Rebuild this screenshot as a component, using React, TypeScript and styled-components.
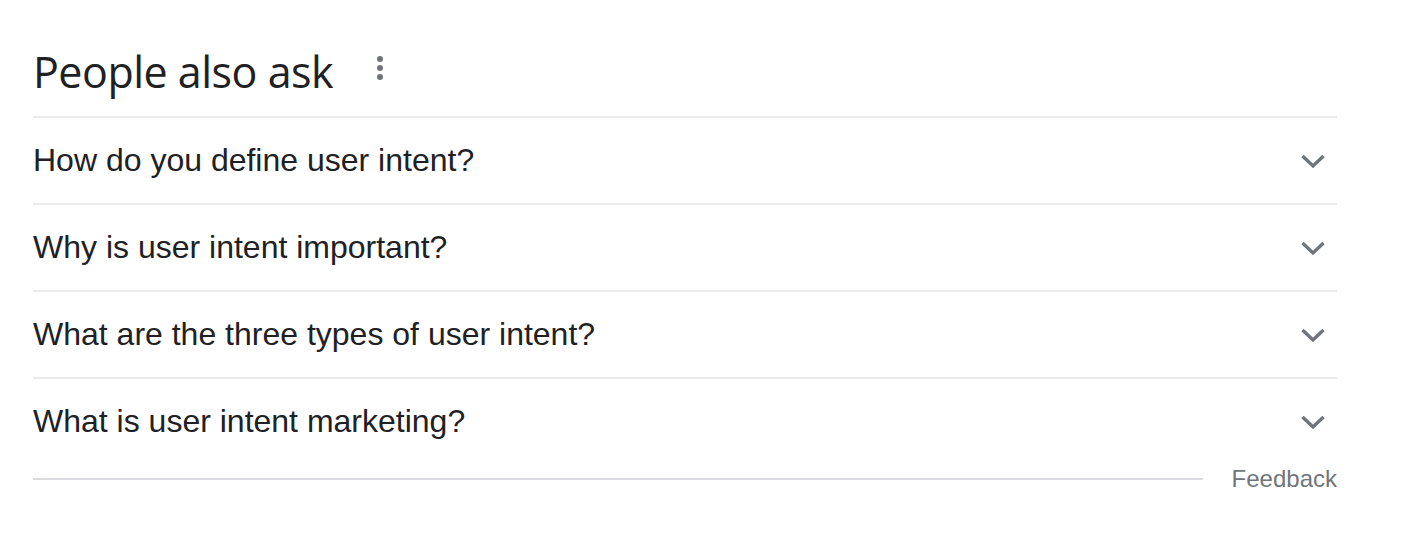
import React from 'react';
import styled, { createGlobalStyle } from 'styled-components';

const questions = [
	'How do you define user intent?',
	'Why is user intent important?',
	'What are the three types of user intent?',
	'What is user intent marketing?',
];

const GlobalStyle = createGlobalStyle`
	body {
		margin: 0;
		background: #fff;
		font-family: 'Liberation Sans', Arial, sans-serif;
	}
`;

const Chevron = () => (
	<svg width="26" height="26" viewBox="0 0 26 26">
		<path d="M2.5 8 13 18 23.5 8" fill="none" stroke="#70757a" strokeWidth="3.4" />
	</svg>
);

const Dots = () => (
	<svg width="8" height="26" viewBox="0 0 8 26">
		<circle cx="4" cy="4" r="3" fill="#70757a" />
		<circle cx="4" cy="13" r="3" fill="#70757a" />
		<circle cx="4" cy="22" r="3" fill="#70757a" />
	</svg>
);

const App = () => {
	return (
		<>
			<GlobalStyle />
			<Wrapper>
				<Header>
					<Title>People also ask</Title>
					<MenuBtn>
						<Dots />
					</MenuBtn>
				</Header>
				<List>
					{questions.map((q) => (
						<Row key={q}>
							<Question>{q}</Question>
							<Chevron />
						</Row>
					))}
				</List>
				<Footer>
					<FooterLine />
					<Feedback>Feedback</Feedback>
				</Footer>
			</Wrapper>
		</>
	);
};

export default App;

const Wrapper = styled.div`
	width: 1304px;
	padding: 42px 0 0 33px;
`;

const Header = styled.div`
	display: flex;
	align-items: center;
	height: 58px;
	padding-bottom: 16px;
	border-bottom: 2px solid #ebebeb;
`;

const Title = styled.div`
	font-family: 'Open Sans', Roboto, sans-serif;
	font-size: 43px;
	color: #202124;
	letter-spacing: -0.5px;
`;

const MenuBtn = styled.div`
	display: flex;
	margin-left: 43px;
	margin-top: -6px;
`;

const List = styled.div`
	display: flex;
	flex-direction: column;
`;

const Row = styled.div`
	display: flex;
	align-items: center;
	justify-content: space-between;
	height: 85px;
	border-bottom: 2px solid #ebebeb;
	padding-right: 11px;

	&:last-child {
		border-bottom: none;
	}
`;

const Question = styled.div`
	font-size: 32px;
	color: #202124;
`;

const Footer = styled.div`
	display: flex;
	align-items: center;
	gap: 29px;
	height: 30px;
`;

const FooterLine = styled.div`
	flex: 1;
	height: 2px;
	background: #dadce0;
`;

const Feedback = styled.div`
	font-size: 24px;
	color: #70757a;
`;
